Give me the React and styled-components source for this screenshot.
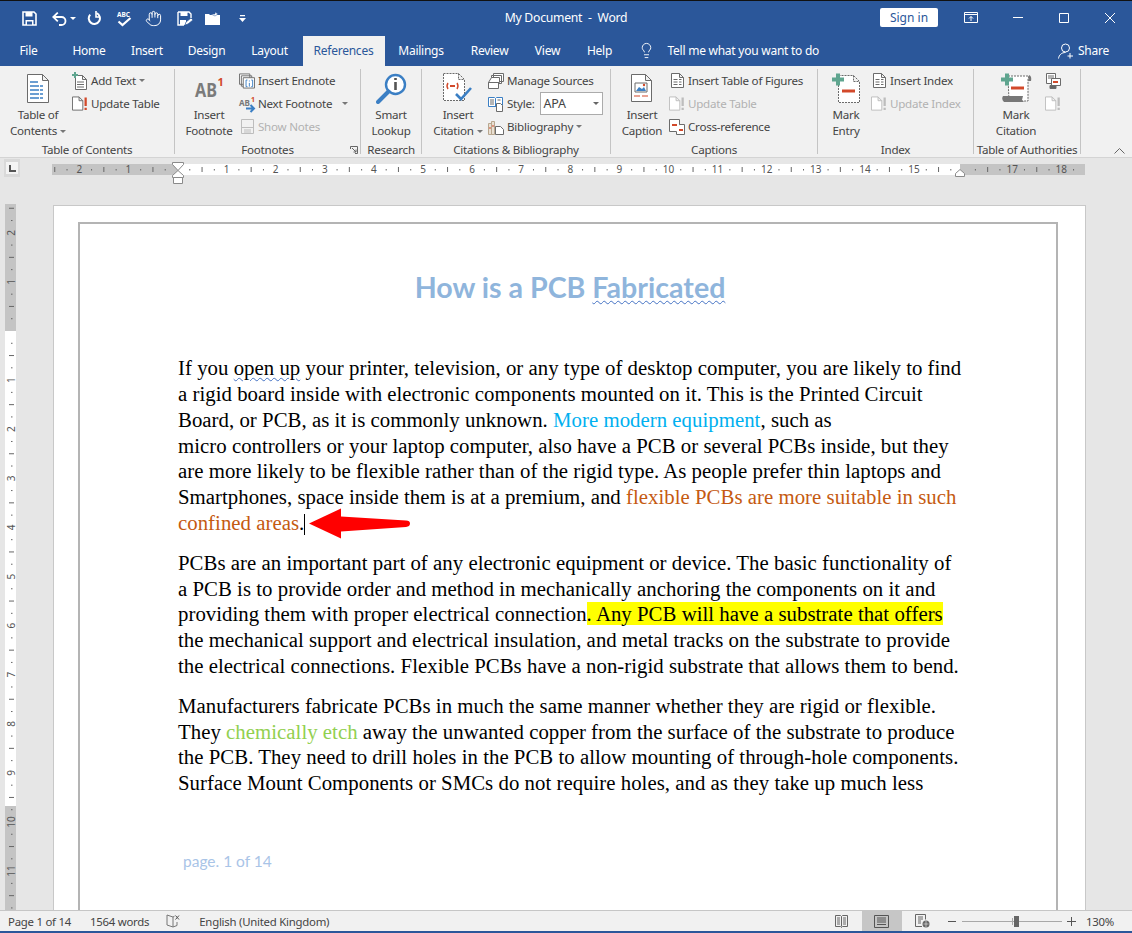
import React from "react";
import styled, { createGlobalStyle } from "styled-components";
import { Hand, Lightbulb } from "lucide-react";

const BLUE = "#2b579a";
const INK = "#6b6b6b";
const ORANGE = "#d2492a";
const TEAL = "#5fa58f";
const SKY = "#3b7fc4";
const OFF = "#bdbdbd";

const GlobalStyle = createGlobalStyle`
  html, body { margin: 0; padding: 0; background: #e6e6e6; }
  * { box-sizing: border-box; }
`;

const Window = styled.div`
  width: 1132px;
  height: 933px;
  display: flex;
  flex-direction: column;
  overflow: hidden;
  font-family: "Noto Sans", "Open Sans", sans-serif;
  font-size: 11.6px;
  letter-spacing: -0.25px;
  color: #444;
`;

const TitleBar = styled.header`
  height: 36px;
  flex: none;
  display: grid;
  grid-template-columns: 1fr auto 1fr;
  align-items: center;
  background: ${BLUE};
  border-top: 1px solid #111;
  color: #fff;
`;
const Qat = styled.div`
  display: flex;
  align-items: center;
  padding-left: 22px;
`;
const QatItem = styled.span`
  display: flex;
  margin-left: ${(p) => p.$ml || 0}px;
`;
const DocTitle = styled.div`
  font-size: 12.2px;
  margin-top: -2px;
`;
const WinControls = styled.div`
  display: flex;
  align-items: center;
  justify-content: flex-end;
  padding-right: 17px;
  margin-top: -2px;
`;
const SignIn = styled.button`
  width: 58px;
  height: 19px;
  padding: 0;
  border: 0;
  border-radius: 2px;
  background: #fff;
  color: ${BLUE};
  font: inherit;
  font-size: 12px;
  margin-right: 26px;
`;
const WinButton = styled.span`
  display: flex;
  margin-left: ${(p) => p.$ml || 0}px;
`;

const TabBar = styled.nav`
  height: 30px;
  flex: none;
  display: flex;
  align-items: stretch;
  padding-left: 6px;
  background: ${BLUE};
  color: #fff;
  font-size: 12px;
`;
const Tab = styled.div`
  width: ${(p) => p.$w}px;
  margin-left: ${(p) => p.$ml || 0}px;
  display: flex;
  align-items: center;
  justify-content: center;
  background: ${(p) => (p.$active ? "#f1f1f1" : "transparent")};
  color: ${(p) => (p.$active ? BLUE : "#fff")};
  padding-bottom: 1px;
`;
const TellMe = styled.div`
  display: flex;
  align-items: center;
  gap: 13px;
  margin-left: 12px;
  padding-bottom: 1px;
`;
const Share = styled.div`
  margin-left: auto;
  margin-right: 23px;
  display: flex;
  align-items: center;
  gap: 4px;
  padding-bottom: 1px;
`;

const Ribbon = styled.section`
  height: 92px;
  flex: none;
  display: flex;
  position: relative;
  padding-top: 3px;
  background: #f1f1f1;
  border-bottom: 1px solid #d4d4d4;
`;
const Group = styled.div`
  width: ${(p) => p.$w}px;
  height: 85px;
  display: flex;
  flex-direction: column;
  position: relative;
  border-right: 1px solid #c4c4c4;
`;
const GroupBody = styled.div`
  height: 73px;
  display: flex;
  padding-left: ${(p) => p.$pad || 0}px;
`;
const GroupLabel = styled.div`
  height: 12px;
  line-height: 16px;
  text-align: center;
  white-space: nowrap;
`;
const Launcher = styled.span`
  position: absolute;
  right: 2px;
  bottom: 0;
  display: flex;
`;
const Collapse = styled.span`
  position: absolute;
  left: 1114px;
  top: 82px;
  display: flex;
`;
const BigButton = styled.div`
  width: ${(p) => p.$w}px;
  flex: none;
  display: flex;
  flex-direction: column;
  align-items: center;
`;
const BigIcon = styled.div`
  height: 38px;
  display: flex;
  align-items: center;
  justify-content: center;
`;
const BigText = styled.div`
  line-height: 16px;
  text-align: center;
  white-space: nowrap;
`;
const Caret = styled.span`
  display: inline-block;
  width: 0;
  height: 0;
  margin-left: ${(p) => p.$ml ?? 3}px;
  vertical-align: 2px;
  border-left: 3px solid transparent;
  border-right: 3px solid transparent;
  border-top: 3px solid ${(p) => p.$color || "#777"};
`;
const SmallColumn = styled.div`
  margin-left: ${(p) => p.$ml || 0}px;
  display: flex;
  flex-direction: column;
`;
const SmallButton = styled.div`
  height: 23px;
  display: flex;
  align-items: center;
  white-space: nowrap;
  color: ${(p) => (p.$off ? "#b1b1b1" : "inherit")};
`;
const SmallIcon = styled.span`
  width: 16px;
  margin-right: 3px;
  flex: none;
  display: flex;
  justify-content: center;
`;
const Combo = styled.div`
  width: 63px;
  height: 23px;
  margin-left: 5px;
  padding: 0 3px;
  display: flex;
  align-items: center;
  justify-content: space-between;
  background: #fff;
  border: 1px solid #ababab;
  font-size: 12.5px;
`;

const Workspace = styled.main`
  flex: 1;
  min-height: 0;
  display: flex;
  flex-direction: column;
  background: #e6e6e6;
`;
const RulerRow = styled.div`
  height: 46px;
  flex: none;
  display: flex;
  align-items: flex-start;
  padding: 1px 0 0 4px;
`;
const TabStop = styled.div`
  width: 16px;
  height: 18px;
  margin-right: 32px;
  display: flex;
  align-items: center;
  justify-content: center;
  background: #d9d9d9;
  & > span {
    width: 12px;
    height: 12px;
    display: flex;
    align-items: center;
    justify-content: center;
    background: #f4f4f4;
  }
`;
const DocRow = styled.div`
  flex: 1;
  min-height: 0;
  display: flex;
  padding-left: 5px;
`;
const Page = styled.div`
  width: 1033px;
  margin: 1px 0 0 37px;
  padding: 16px 27px 0 24px;
  background: #fff;
  border: 1px solid #c8c8c8;
  border-bottom: 0;
`;
const Frame = styled.div`
  height: 100%;
  padding: 43px 0 0 98px;
  border: solid #b4b4b4;
  border-width: 2px 2px 0 2px;
  font-family: "Liberation Serif", serif;
  font-size: 20.8px;
  letter-spacing: 0.03px;
  color: #000;
`;
const Heading = styled.h1`
  margin: 0 0 48.3px -98px;
  height: 40px;
  line-height: 40px;
  padding-left: 4px;
  text-align: center;
  font-family: Lato, "Open Sans", sans-serif;
  font-size: 28.6px;
  font-weight: 700;
  letter-spacing: 0;
  color: #8fb5dc;
`;
const Paragraph = styled.p`
  margin: 0 0 14px;
`;
const Line = styled.span`
  display: block;
  height: 25.8px;
  line-height: 25.8px;
  white-space: nowrap;
`;
const Squiggle = styled.span`
  text-decoration: underline wavy #4472c4 1px;
  text-underline-offset: 2px;
`;
const Tint = styled.span`
  color: ${(p) => p.$color};
`;
const Marked = styled.span`
  background: #ffff00;
`;
const Cursor = styled.span`
  position: relative;
  display: inline-block;
  width: 0;
  height: 21px;
  vertical-align: -5px;
  border-left: 1px solid #000;
  & > svg {
    position: absolute;
    left: 3px;
    top: -6px;
  }
`;
const PageFoot = styled.div`
  margin: 55px 0 0 5px;
  line-height: 20px;
  font-family: Lato, "Open Sans", sans-serif;
  font-size: 15.5px;
  letter-spacing: 0;
  color: #a9c4e7;
`;

const StatusBar = styled.footer`
  height: 23px;
  flex: none;
  display: flex;
  align-items: stretch;
  background: #f1f1f1;
  border-top: 1px solid #c6c6c6;
  border-bottom: 2px solid ${BLUE};
  font-size: 11.4px;
`;
const StatusItem = styled.span`
  display: flex;
  align-items: center;
  margin-left: ${(p) => p.$ml || 0}px;
  margin-right: ${(p) => p.$mr || 0}px;
  white-space: nowrap;
`;
const ViewButton = styled.span`
  width: ${(p) => p.$w}px;
  margin-left: ${(p) => p.$ml || 0}px;
  display: flex;
  align-items: center;
  justify-content: center;
  background: ${(p) => (p.$on ? "#c6c6c6" : "transparent")};
`;
const Spacer = styled.span`
  flex: 1;
`;
const Slider = styled.span`
  width: 100px;
  margin-left: 6px;
  position: relative;
  align-self: center;
  height: 1px;
  background: #a8a8a8;
  &::before {
    content: "";
    position: absolute;
    left: 50px;
    top: -3px;
    width: 1px;
    height: 7px;
    background: #a8a8a8;
  }
  &::after {
    content: "";
    position: absolute;
    left: 52px;
    top: -5px;
    width: 5px;
    height: 11px;
    background: #666;
  }
`;

/* title bar icons */
const SaveIcon = () => (
  <svg width="15" height="15" viewBox="0 0 15 15">
    <path d="M1 1h11l2 2v11H1z" fill="none" stroke="#fff" strokeWidth="1.6" />
    <path d="M3.5 1h7v4.5h-7zM3.5 9h8v5h-8z" fill="#fff" />
    <path d="M5 10.5h5v3H5z" fill={BLUE} />
  </svg>
);
const UndoIcon = () => (
  <svg width="15" height="14" viewBox="0 0 15 14">
    <path d="M1.5 5h8a4 4 0 0 1 0 8H7" fill="none" stroke="#fff" strokeWidth="1.8" />
    <path d="M5.8.6 1.2 5l4.6 4.4" fill="none" stroke="#fff" strokeWidth="1.8" />
  </svg>
);
const RedoIcon = () => (
  <svg width="14" height="15" viewBox="0 0 14 15">
    <path d="M9.5 2.2A5.6 5.6 0 1 1 3.2 3.6" fill="none" stroke="#fff" strokeWidth="2" />
    <path d="M9 0v6H13" fill="none" stroke="#fff" strokeWidth="1.6" />
  </svg>
);
const SpellIcon = () => (
  <svg width="15" height="17" viewBox="0 0 15 17" style={{ overflow: "visible" }}>
    <text x="0" y="6.5" fontSize="6.5" fontWeight="700" fill="#fff" fontFamily="Noto Sans" letterSpacing="0">ABC</text>
    <path d="M1.5 11.5 5.5 15 13.5 8" fill="none" stroke="#fff" strokeWidth="2.2" />
  </svg>
);
const PreviewIcon = () => (
  <svg width="16" height="15" viewBox="0 0 16 15">
    <path d="M1 1h11l2 2v4M7 14H1V1" fill="none" stroke="#fff" strokeWidth="1.4" />
    <path d="M3.5 1h7v4h-7zM3 9h6v5H3z" fill="#fff" />
    <path d="M8 14l1-3 5-4 2 2-5 4z" fill="#fff" stroke={BLUE} strokeWidth=".7" />
  </svg>
);
const FolderIcon = () => (
  <svg width="16" height="13" viewBox="0 0 16 13">
    <path d="M0 2h4l1 1h10v10H0z" fill="#fff" />
    <path d="M6 2h4V0l3 2-3 2z" fill="#fff" stroke={BLUE} strokeWidth=".5" />
  </svg>
);
const CustomizeIcon = () => (
  <svg width="7" height="7" viewBox="0 0 7 7">
    <path d="M1 0h5v1.2H1zM0 3h7L3.5 7z" fill="#fff" />
  </svg>
);
const DisplayIcon = () => (
  <svg width="14" height="11" viewBox="0 0 14 11" fill="none" stroke="#fff">
    <path d="M.5.5h13v10H.5zM.5 2.5h13M7 9V4.5M5 6.5l2-2 2 2" />
  </svg>
);
const MinIcon = () => (
  <svg width="10" height="1" viewBox="0 0 10 1"><path d="M0 .5h10" stroke="#fff" /></svg>
);
const MaxIcon = () => (
  <svg width="10" height="10" viewBox="0 0 10 10"><path d="M.5.5h9v9h-9z" fill="none" stroke="#fff" /></svg>
);
const CloseIcon = () => (
  <svg width="10" height="10" viewBox="0 0 10 10"><path d="M0 0l10 10M10 0 0 10" stroke="#fff" /></svg>
);
const ShareIcon = () => (
  <svg width="16" height="16" viewBox="0 0 16 16" fill="none" stroke="#fff">
    <circle cx="7.5" cy="5" r="4" />
    <path d="M.5 15.5c.5-3.5 3-6 7-6M12 10v5.5M9.5 13H15" />
  </svg>
);

/* ribbon icons */
const Sheet = ({ w, h, fold = 6, color = INK, dash }) => (
  <path
    d={`M.5.5h${w - fold - 1}l${fold} ${fold}v${h - fold - 1}h-${w - 1}zM${w - fold - 0.5} .5v${fold}h${fold}`}
    fill="#fff"
    stroke={color}
    strokeDasharray={dash}
  />
);
const TocIcon = () => (
  <svg width="22" height="29" viewBox="0 0 22 29">
    <Sheet w={22} h={29} />
    <path d="M3 8h8M3 12h13M3 16h13M3 20h13M3 24h13" stroke={SKY} strokeWidth="1.5" strokeDasharray="9 1 3 0" />
  </svg>
);
const AddTextIcon = () => (
  <svg width="16" height="18" viewBox="0 0 16 18">
    <g transform="translate(3 3)"><Sheet w={12} h={15} fold={4} /></g>
    <path d="M5 10h7M5 12.500h7M5 15h7" stroke={INK} />
    <path d="M0 3h6M3 0v6" stroke={TEAL} strokeWidth="2" />
  </svg>
);
const UpdateIcon = ({ off }) => (
  <svg width="17" height="16" viewBox="0 0 17 16">
    <Sheet w={12} h={15} fold={4} color={off ? OFF : INK} />
    <path d="M14.500 1v9M14.500 12v2.500" stroke={off ? OFF : ORANGE} strokeWidth="2.400" />
  </svg>
);
const FootnoteIcon = () => (
  <svg width="30" height="24" viewBox="0 0 30 24" style={{ overflow: "visible" }}>
    <text x="1" y="21" fontSize="19" fontWeight="700" fill="#7b7b7b" fontFamily="Noto Sans" letterSpacing="0" textLength="22" lengthAdjust="spacingAndGlyphs">AB</text>
    <text x="23.500" y="10" fontSize="11" fontWeight="700" fill={ORANGE} fontFamily="Noto Sans" letterSpacing="0">1</text>
  </svg>
);
const EndnoteIcon = () => (
  <svg width="17" height="16" viewBox="0 0 17 16" fill="#fff" stroke={INK}>
    <path d="M.5.5h11v11H.5zM2.500 2.500h11v11h-11z" />
    <path d="M4.500 4.500h12v11h-12z" />
    <path d="M7.500 7v7M9 7H7.500M9 14H7.500M14.500 7v7M13 7h1.500M13 14h1.500M11 7.500v1M11 10v4" stroke={SKY} fill="none" />
  </svg>
);
const NextNoteIcon = () => (
  <svg width="17" height="16" viewBox="0 0 17 16" style={{ overflow: "visible" }}>
    <text x="0" y="10" fontSize="9" fontWeight="700" fill="#777" fontFamily="Noto Sans" letterSpacing="0" textLength="11" lengthAdjust="spacingAndGlyphs">AB</text>
    <text x="12" y="6" fontSize="7" fontWeight="700" fill={ORANGE} fontFamily="Noto Sans" letterSpacing="0">1</text>
    <path d="M7 12.500h7M11.500 9l3.500 3.500-3.500 3.500" fill="none" stroke={SKY} strokeWidth="2" />
  </svg>
);
const NotesIcon = () => (
  <svg width="13" height="15" viewBox="0 0 13 15" fill="none" stroke={OFF}>
    <path d="M.5.5h12v14H.5zM.5 8.500h12M3 11h7M3 13h7" />
  </svg>
);
const LookupIcon = () => (
  <svg width="31" height="31" viewBox="0 0 31 31">
    <circle cx="19.500" cy="11.500" r="9.500" fill="#fff" stroke={SKY} strokeWidth="2.400" />
    <path d="M12.500 18.500 2 29" stroke={SKY} strokeWidth="4" strokeLinecap="round" />
    <path d="M19.500 5v2M19.500 9v8" stroke="#555" strokeWidth="2.600" />
  </svg>
);
const CitationIcon = () => (
  <svg width="30" height="30" viewBox="0 0 30 30">
    <Sheet w={22} h={28} dash="2 1" />
    <path d="M5 10q-2 3 0 6M14 10q2 3 0 6" fill="none" stroke={ORANGE} strokeWidth="1.400" />
    <path d="M7 13h5" stroke={ORANGE} strokeWidth="2" />
    <path d="M13 21l5 5 10-11" fill="none" stroke={SKY} strokeWidth="2.600" />
  </svg>
);
const ManageIcon = () => (
  <svg width="16" height="16" viewBox="0 0 16 16" fill="#fff" stroke={INK}>
    <path d="M5.500.5h10v8h-10zM3.500 2.500h10v8h-10z" />
    <path d="M.5 9.500l3-5h8v5zM.5 9.500h10v6H.5z" />
  </svg>
);
const StyleIcon = () => (
  <svg width="16" height="16" viewBox="0 0 16 16" fill="#fff" stroke={SKY}>
    <path d="M.5 1.500h6l1 1 1-1h6v9h-14zM7.500 2.500v8" />
    <path d="M2 4h4M2 6h4M2 8h4M9.500 4h3" stroke={INK} />
    <path d="M8.500 7.500h4l2 2v6h-6z" stroke={INK} />
  </svg>
);
const BibIcon = () => (
  <svg width="16" height="16" viewBox="0 0 16 16" fill="#fff">
    <path d="M.5 4.500h3v11h-3zM3.500 2.500h3v13h-3z" stroke="#b8a78f" fill="#e9e0d3" />
    <path d="M1 9h2M4 7h2" stroke={ORANGE} />
    <path d="M7.500 7.500h5l3 3v5h-8z" stroke={INK} />
  </svg>
);
const CaptionIcon = () => (
  <svg width="22" height="29" viewBox="0 0 22 29">
    <Sheet w={21} h={28} />
    <path d="M4 9h12v9H4z" fill="#fff" stroke={INK} />
    <path d="M5 17l3-4 3 2 2-2 2 4z" fill={SKY} />
    <circle cx="13" cy="11" r="1.200" fill={ORANGE} />
    <path d="M3 22h6M11 22h6" stroke={ORANGE} strokeWidth="1.200" />
  </svg>
);
const FiguresIcon = () => (
  <svg width="13" height="15" viewBox="0 0 13 15">
    <Sheet w={13} h={15} fold={4} />
    <path d="M2.500 6.500h4M8 6.500h2.500M2.500 9h4M8 9h2.500M2.500 11.500h4M8 11.500h2.500" stroke={INK} />
  </svg>
);
const CrossRefIcon = () => (
  <svg width="16" height="16" viewBox="0 0 16 16" fill="#fff" stroke={INK}>
    <path d="M.5.5h10v12H.5z" />
    <path d="M10.500 5.500h5v10h-8v-3" />
    <path d="M3 6h5M10 11h4" stroke={ORANGE} strokeWidth="1.800" />
  </svg>
);
const PlusBadge = () => (
  <path d="M0 6.500h12M6 .5v12" stroke={TEAL} strokeWidth="4" />
);
const MarkEntryIcon = () => (
  <svg width="28" height="30" viewBox="0 0 28 30">
    <g transform="translate(6 2)"><Sheet w={22} h={28} dash="2 1" /></g>
    <path d="M10 18h13" stroke={ORANGE} strokeWidth="3" />
    <PlusBadge />
  </svg>
);
const ScrollIcon = () => (
  <svg width="31" height="30" viewBox="0 0 31 30">
    <path d="M7 3h21l-1 3v22H8z" fill="#fff" stroke={INK} strokeDasharray="2 1" />
    <path d="M28 2q3 1 2 6h-3" fill="#777" />
    <path d="M2 23h20l-1 4q1 2 3 2H3q-3-3-1-6z" fill="#777" />
    <path d="M10 15h13" stroke={ORANGE} strokeWidth="3" />
    <PlusBadge />
  </svg>
);
const CiteStackIcon = () => (
  <svg width="15" height="16" viewBox="0 0 15 16" fill="#fff" stroke={INK}>
    <path d="M.5.5h9v10h-9z" />
    <path d="M2 3h6M2 5h6" />
    <path d="M5.500 5.500h9v7h-9z" />
    <path d="M7 9h5" stroke={ORANGE} strokeWidth="2" />
    <path d="M4 12.500h6v3H4z" fill="#666" />
  </svg>
);
const LauncherIcon = () => (
  <svg width="8" height="8" viewBox="0 0 8 8" fill="none" stroke="#666">
    <path d="M.5 3V.5H7.500v7H5M2 2l4 4M3.500 6H6V3.500" />
  </svg>
);
const ChevronIcon = () => (
  <svg width="11" height="6" viewBox="0 0 11 6" fill="none" stroke="#666"><path d="M.5 5.500l5-5 5 5" /></svg>
);
const TabStopIcon = () => (
  <svg width="7" height="7" viewBox="0 0 7 7"><path d="M0 0h2v5h5v2H0z" fill="#555" /></svg>
);

/* status bar icons */
const ProofIcon = () => (
  <svg width="14" height="14" viewBox="0 0 14 14" fill="none" stroke="#777">
    <path d="M7 3 1 1v10l6 2V3zM7 3l1.500-.8M7 13l4-1.500V8" />
    <path d="M9.500 1.500l3.500 4M13 1.500l-3.500 4" stroke="#555" />
  </svg>
);
const ReadIcon = () => (
  <svg width="13" height="13" viewBox="0 0 13 13" fill="none" stroke="#666">
    <path d="M.5.5h5l1 1 1-1h5v11h-5l-1 1-1-1h-5zM6.500 1.500v10M2 3h3M2 5h3M2 7h3M2 9h3M8 3h3M8 5h3M8 7h3M8 9h3" />
  </svg>
);
const PrintIcon = () => (
  <svg width="15" height="13" viewBox="0 0 15 13" fill="none" stroke="#555">
    <path d="M.5.5h14v12H.5zM3 3h9M3 5h9M3 7h9M3 9.500h9" />
  </svg>
);
const WebIcon = () => (
  <svg width="15" height="14" viewBox="0 0 15 14" fill="none" stroke="#666">
    <path d="M7 12.500H.5V.5h10v5M3 3h5M3 5h5M3 7h3M3 9h3" />
    <circle cx="11" cy="10" r="3.500" fill="#666" stroke="none" />
    <path d="M8.500 10h5M11 7v6" stroke="#eee" strokeWidth=".6" />
  </svg>
);
const ZoomMinus = () => (
  <svg width="8" height="1" viewBox="0 0 8 1"><path d="M0 .5h8" stroke="#555" /></svg>
);
const ZoomPlus = () => (
  <svg width="9" height="9" viewBox="0 0 9 9"><path d="M0 4.500h9M4.500 0v9" stroke="#555" /></svg>
);

const RedArrow = () => (
  <svg width="103" height="31" viewBox="0 0 103 31">
    <path d="M1 15.500 33 .5v8l65 4q4 0 4 3t-4 3.500l-65 4.500V30.500z" fill="#ff0000" />
  </svg>
);

/* rulers */
const cmX = 49.1;
const numbers = (from, to) => {
  const out = [];
  for (let i = from; i <= to; i++) if (i !== 0 && i !== 16) out.push(i);
  return out;
};
const quarters = (from, to) => {
  const out = [];
  for (let q = from * 4; q <= to * 4; q++) if (q % 4 !== 0) out.push(q / 4);
  return out;
};
const rulerFont = { fontFamily: "Noto Sans", fontSize: 10, letterSpacing: 0, fill: "#555" };

const TopRuler = () => {
  const zero = 125.5;
  return (
    <svg width="1033" height="30" viewBox="0 0 1033 30" style={{ overflow: "visible" }}>
      <rect x="0" y="5" width="1033" height="11" fill="#c4c4c4" />
      <rect x="126" y="5" width="782" height="11" fill="#fff" />
      {quarters(-2.5, 18.25).map((v) =>
        Math.abs(v % 1) === 0.5 ? (
          <path key={v} d={`M${zero + v * cmX} 8v5`} stroke="#666" />
        ) : (
          <path key={v} d={`M${zero + v * cmX} 10v1.500`} stroke="#666" />
        )
      )}
      {numbers(-2, 18).map((n) => (
        <text key={n} x={zero + n * cmX} y="14" textAnchor="middle" {...rulerFont}>
          {Math.abs(n)}
        </text>
      ))}
      <path d="M120.500 3.500h11v2l-5.500 6-5.500-6zM120.500 18.500v-2l5.500-5 5.500 5v2z" fill="#fff" stroke="#8a8a8a" />
      <path d="M121.500 18.500h9v6h-9z" fill="#fff" stroke="#8a8a8a" />
      <path d="M903.500 17.500v-3l4.500-4 4.500 4v3z" fill="#fff" stroke="#8a8a8a" />
    </svg>
  );
};

const SideRuler = () => {
  const zero = 127;
  return (
    <svg width="11" height="706" viewBox="0 0 11 706" style={{ flex: "none" }}>
      <rect width="11" height="706" fill="#c4c4c4" />
      <rect y="127" width="11" height="475" fill="#fff" />
      {quarters(-2.5, 11.75).map((v) =>
        Math.abs(v % 1) === 0.5 ? (
          <path key={v} d={`M4 ${zero + v * cmX}h5`} stroke="#666" />
        ) : (
          <path key={v} d={`M6 ${zero + v * cmX}h1.500`} stroke="#666" />
        )
      )}
      {numbers(-2, 11).map((n) => {
        const y = zero + n * cmX;
        return (
          <text
            key={n}
            x="10"
            y={y}
            textAnchor="middle"
            transform={`rotate(-90 10 ${y})`}
            {...rulerFont}
          >
            {Math.abs(n)}
          </text>
        );
      })}
    </svg>
  );
};

const Small = ({ icon, off, children }) => (
  <SmallButton $off={off}>
    <SmallIcon>{icon}</SmallIcon>
    {children}
  </SmallButton>
);

const Big = ({ w, icon, children }) => (
  <BigButton $w={w}>
    <BigIcon>{icon}</BigIcon>
    <BigText>{children}</BigText>
  </BigButton>
);

const tabs = [
  ["File", 45, 0],
  ["Home", 60, 8],
  ["Insert", 56],
  ["Design", 63],
  ["Layout", 63],
  ["References", 82, 1.5, true],
  ["Mailings", 73],
  ["Review", 64],
  ["View", 52],
  ["Help", 52],
];

export default function App() {
  return (
    <Window>
      <GlobalStyle />
      <TitleBar>
        <Qat>
          <QatItem><SaveIcon /></QatItem>
          <QatItem $ml={15}><UndoIcon /></QatItem>
          <QatItem $ml={3}><Caret $ml={0} $color="#fff" /></QatItem>
          <QatItem $ml={11}><RedoIcon /></QatItem>
          <QatItem $ml={16}><SpellIcon /></QatItem>
          <QatItem $ml={13}><Hand size={17} strokeWidth={1.4} color="#fff" /></QatItem>
          <QatItem $ml={15}><PreviewIcon /></QatItem>
          <QatItem $ml={12}><FolderIcon /></QatItem>
          <QatItem $ml={18}><CustomizeIcon /></QatItem>
        </Qat>
        <DocTitle>My Document&nbsp; -&nbsp; Word</DocTitle>
        <WinControls>
          <SignIn>Sign in</SignIn>
          <WinButton><DisplayIcon /></WinButton>
          <WinButton $ml={35}><MinIcon /></WinButton>
          <WinButton $ml={36}><MaxIcon /></WinButton>
          <WinButton $ml={36}><CloseIcon /></WinButton>
        </WinControls>
      </TitleBar>

      <TabBar>
        {tabs.map(([label, w, ml, active]) => (
          <Tab key={label} $w={w} $ml={ml} $active={active}>{label}</Tab>
        ))}
        <TellMe>
          <Lightbulb size={17} strokeWidth={1.3} color="#fff" />
          Tell me what you want to do
        </TellMe>
        <Share>
          <ShareIcon />
          Share
        </Share>
      </TabBar>

      <Ribbon>
        <Group $w={175}>
          <GroupBody $pad={4}>
            <Big w={68} icon={<TocIcon />}>Table of<br />Contents<Caret /></Big>
            <SmallColumn>
              <Small icon={<AddTextIcon />}>Add Text<Caret /></Small>
              <Small icon={<UpdateIcon />}>Update Table</Small>
            </SmallColumn>
          </GroupBody>
          <GroupLabel>Table of Contents</GroupLabel>
        </Group>
        <Group $w={186}>
          <GroupBody $pad={6}>
            <Big w={56} icon={<FootnoteIcon />}>Insert<br />Footnote</Big>
            <SmallColumn $ml={2}>
              <Small icon={<EndnoteIcon />}>Insert Endnote</Small>
              <Small icon={<NextNoteIcon />}>Next Footnote<Caret $ml={10} /></Small>
              <Small icon={<NotesIcon />} off>Show Notes</Small>
            </SmallColumn>
          </GroupBody>
          <GroupLabel>Footnotes</GroupLabel>
          <Launcher><LauncherIcon /></Launcher>
        </Group>
        <Group $w={61}>
          <GroupBody>
            <Big w={60} icon={<LookupIcon />}>Smart<br />Lookup</Big>
          </GroupBody>
          <GroupLabel>Research</GroupLabel>
        </Group>
        <Group $w={189}>
          <GroupBody $pad={6}>
            <Big w={60} icon={<CitationIcon />}>Insert<br />Citation<Caret /></Big>
            <SmallColumn>
              <Small icon={<ManageIcon />}>Manage Sources</Small>
              <Small icon={<StyleIcon />}>
                Style:
                <Combo>APA<Caret $ml={0} $color="#666" /></Combo>
              </Small>
              <Small icon={<BibIcon />}>Bibliography<Caret /></Small>
            </SmallColumn>
          </GroupBody>
          <GroupLabel>Citations &amp; Bibliography</GroupLabel>
        </Group>
        <Group $w={207}>
          <GroupBody $pad={5}>
            <Big w={52} icon={<CaptionIcon />}>Insert<br />Caption</Big>
            <SmallColumn $ml={1}>
              <Small icon={<FiguresIcon />}>Insert Table of Figures</Small>
              <Small icon={<UpdateIcon off />} off>Update Table</Small>
              <Small icon={<CrossRefIcon />}>Cross-reference</Small>
            </SmallColumn>
          </GroupBody>
          <GroupLabel>Captions</GroupLabel>
        </Group>
        <Group $w={156}>
          <GroupBody $pad={4}>
            <Big w={48} icon={<MarkEntryIcon />}>Mark<br />Entry</Big>
            <SmallColumn $ml={1}>
              <Small icon={<FiguresIcon />}>Insert Index</Small>
              <Small icon={<UpdateIcon off />} off>Update Index</Small>
            </SmallColumn>
          </GroupBody>
          <GroupLabel>Index</GroupLabel>
        </Group>
        <Group $w={107}>
          <GroupBody $pad={14}>
            <Big w={56} icon={<ScrollIcon />}>Mark<br />Citation</Big>
            <SmallColumn $ml={1}>
              <Small icon={<CiteStackIcon />} />
              <Small icon={<UpdateIcon off />} off />
            </SmallColumn>
          </GroupBody>
          <GroupLabel>Table of Authorities</GroupLabel>
        </Group>
        <Collapse><ChevronIcon /></Collapse>
      </Ribbon>

      <Workspace>
        <RulerRow>
          <TabStop><span><TabStopIcon /></span></TabStop>
          <TopRuler />
        </RulerRow>
        <DocRow>
          <SideRuler />
          <Page>
            <Frame>
              <Heading>How is a PCB <Squiggle>Fabricated</Squiggle></Heading>
              <Paragraph>
                <Line>If you <Squiggle>open up</Squiggle> your printer, television, or any type of desktop computer, you are likely to find</Line>
                <Line>a rigid board inside with electronic components mounted on it. This is the Printed Circuit</Line>
                <Line>Board, or PCB, as it is commonly unknown. <Tint $color="#00b0f0">More modern equipment</Tint>, such as</Line>
                <Line>micro controllers or your laptop computer, also have a PCB or several PCBs inside, but they</Line>
                <Line>are more likely to be flexible rather than of the rigid type. As people prefer thin laptops and</Line>
                <Line>Smartphones, space inside them is at a premium, and <Tint $color="#c55a11">flexible PCBs are more suitable in such</Tint></Line>
                <Line><Tint $color="#c55a11">confined areas</Tint>.<Cursor><RedArrow /></Cursor></Line>
              </Paragraph>
              <Paragraph>
                <Line>PCBs are an important part of any electronic equipment or device. The basic functionality of</Line>
                <Line>a PCB is to provide order and method in mechanically anchoring the components on it and</Line>
                <Line>providing them with proper electrical connection<Marked>. Any PCB will have a substrate that offers</Marked></Line>
                <Line>the mechanical support and electrical insulation, and metal tracks on the substrate to provide</Line>
                <Line>the electrical connections. Flexible PCBs have a non-rigid substrate that allows them to bend.</Line>
              </Paragraph>
              <Paragraph>
                <Line>Manufacturers fabricate PCBs in much the same manner whether they are rigid or flexible.</Line>
                <Line>They <Tint $color="#92d050">chemically etch</Tint> away the unwanted copper from the surface of the substrate to produce</Line>
                <Line>the PCB. They need to drill holes in the PCB to allow mounting of through-hole components.</Line>
                <Line>Surface Mount Components or SMCs do not require holes, and as they take up much less</Line>
              </Paragraph>
              <PageFoot>page. 1 of 14</PageFoot>
            </Frame>
          </Page>
        </DocRow>
      </Workspace>

      <StatusBar>
        <StatusItem $ml={8}>Page 1 of 14</StatusItem>
        <StatusItem $ml={19}>1564 words</StatusItem>
        <StatusItem $ml={17}><ProofIcon /></StatusItem>
        <StatusItem $ml={19}>English (United Kingdom)</StatusItem>
        <Spacer />
        <ViewButton $w={13}><ReadIcon /></ViewButton>
        <ViewButton $w={40} $ml={14} $on><PrintIcon /></ViewButton>
        <ViewButton $w={15} $ml={13}><WebIcon /></ViewButton>
        <StatusItem $ml={18}><ZoomMinus /></StatusItem>
        <Slider />
        <StatusItem $ml={5}><ZoomPlus /></StatusItem>
        <StatusItem $ml={10} $mr={18}>130%</StatusItem>
      </StatusBar>
    </Window>
  );
}
